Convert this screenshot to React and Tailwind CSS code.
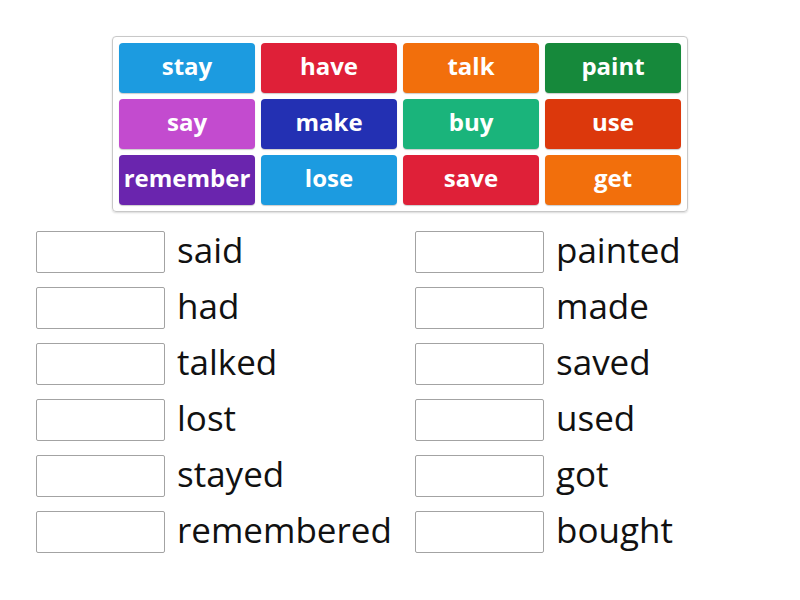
import React from "react";

const tiles = [
  { word: "stay", color: "bg-[#1c9be0]" },
  { word: "have", color: "bg-[#df2038]" },
  { word: "talk", color: "bg-[#f26f0c]" },
  { word: "paint", color: "bg-[#16893b]" },
  { word: "say", color: "bg-[#c34bcf]" },
  { word: "make", color: "bg-[#2330b3]" },
  { word: "buy", color: "bg-[#1ab47b]" },
  { word: "use", color: "bg-[#dc380c]" },
  { word: "remember", color: "bg-[#6a25ae]" },
  { word: "lose", color: "bg-[#1c9be0]" },
  { word: "save", color: "bg-[#df2038]" },
  { word: "get", color: "bg-[#f26f0c]" },
];

const leftWords = ["said", "had", "talked", "lost", "stayed", "remembered"];
const rightWords = ["painted", "made", "saved", "used", "got", "bought"];

function Slot({ word }) {
  return (
    <div className="flex items-center h-[42px]">
      <div className="w-[129px] h-[42px] border border-[#a3a3a3] rounded-[2px] bg-white shrink-0" />
      <span className="ml-3 text-[35px] text-[#111] leading-none pb-[6px]">{word}</span>
    </div>
  );
}

export default function App() {
  return (
    <div
      className="w-[800px] h-[600px] bg-white"
      style={{ fontFamily: '"Open Sans", sans-serif' }}
    >
      <div className="pt-[36px] flex justify-center">
        <div className="w-[576px] p-[6px] border border-[#c8c8c8] rounded-[4px] grid grid-cols-4 gap-[6px] shadow-[0_1px_2px_rgba(0,0,0,0.15)]">
          {tiles.map((t) => (
            <div
              key={t.word}
              className={`${t.color} h-[50px] rounded-[4px] flex items-center justify-center text-white font-bold text-[24px] shadow-[0_1px_1px_rgba(0,0,0,0.2)]`}
            >
              <span className="leading-none pb-[4px]">{t.word}</span>
            </div>
          ))}
        </div>
      </div>

      <div className="mt-[19px] pl-[36px] grid grid-cols-[379px_379px]">
        <div className="flex flex-col gap-[14px]">
          {leftWords.map((w) => (
            <Slot key={w} word={w} />
          ))}
        </div>
        <div className="flex flex-col gap-[14px]">
          {rightWords.map((w) => (
            <Slot key={w} word={w} />
          ))}
        </div>
      </div>
    </div>
  );
}
